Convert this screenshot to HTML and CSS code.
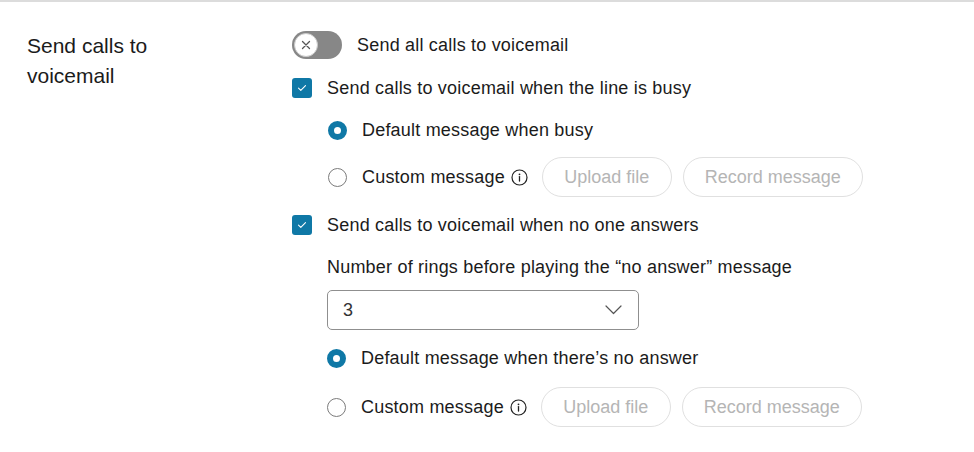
FILE: index.html
```html
<!DOCTYPE html>
<html lang="en">
<head>
<meta charset="utf-8">
<title>Send calls to voicemail</title>
<link rel="stylesheet" href="styles.css">
</head>
<body>
<div class="topline"></div>
<section class="setting">
  <h2 class="setting-title">Send calls to<br>voicemail</h2>
  <div class="controls">
    <div class="row toggle-row">
      <span class="toggle" role="switch" aria-checked="false">
        <span class="knob">
          <svg width="10" height="10" viewBox="0 0 10 10"><path d="M1.5 1.5 L8.5 8.5 M8.5 1.5 L1.5 8.5" stroke="#555" stroke-width="1.3" stroke-linecap="round" fill="none"/></svg>
        </span>
      </span>
      <span class="label">Send all calls to voicemail</span>
    </div>

    <div class="row cb-row">
      <span class="checkbox">
        <svg width="10" height="8" viewBox="0 0 10 8"><path d="M1.5 4.2 L3.8 6.3 L8.5 1.6" stroke="#fff" stroke-width="1.1" fill="none" stroke-linecap="round" stroke-linejoin="round"/></svg>
      </span>
      <span class="label">Send calls to voicemail when the line is busy</span>
    </div>
    <div class="sub">
      <div class="row radio-row r1">
        <span class="radio checked"></span>
        <span class="label">Default message when busy</span>
      </div>
      <div class="row radio-row btn-row r2">
        <span class="radio"></span>
        <span class="label">Custom message</span>
        <svg class="info" width="17" height="17" viewBox="0 0 17 17"><circle cx="8.5" cy="8.5" r="7.5" stroke="#222" stroke-width="1.2" fill="none"/><circle cx="8.5" cy="5.3" r="0.9" fill="#222"/><path d="M8.5 7.6 V12" stroke="#222" stroke-width="1.3" stroke-linecap="round"/></svg>
        <span class="pill pill-upload">Upload file</span>
        <span class="pill pill-record">Record message</span>
      </div>
    </div>

    <div class="row cb-row cb2">
      <span class="checkbox">
        <svg width="10" height="8" viewBox="0 0 10 8"><path d="M1.5 4.2 L3.8 6.3 L8.5 1.6" stroke="#fff" stroke-width="1.1" fill="none" stroke-linecap="round" stroke-linejoin="round"/></svg>
      </span>
      <span class="label">Send calls to voicemail when no one answers</span>
    </div>
    <div class="sub sub-plain">
      <div class="row field-label">Number of rings before playing the “no answer” message</div>
      <div class="select">
        <span class="select-value">3</span>
        <svg width="17" height="10" viewBox="0 0 17 10"><path d="M1 1 L8.5 8.5 L16 1" stroke="#555" stroke-width="1.2" fill="none" stroke-linecap="round" stroke-linejoin="round"/></svg>
      </div>
      <div class="row radio-row r3">
        <span class="radio checked"></span>
        <span class="label">Default message when there’s no answer</span>
      </div>
      <div class="row radio-row btn-row r4">
        <span class="radio"></span>
        <span class="label">Custom message</span>
        <svg class="info" width="17" height="17" viewBox="0 0 17 17"><circle cx="8.5" cy="8.5" r="7.5" stroke="#222" stroke-width="1.2" fill="none"/><circle cx="8.5" cy="5.3" r="0.9" fill="#222"/><path d="M8.5 7.6 V12" stroke="#222" stroke-width="1.3" stroke-linecap="round"/></svg>
        <span class="pill pill-upload">Upload file</span>
        <span class="pill pill-record">Record message</span>
      </div>
    </div>
  </div>
</section>
</body>
</html>
```

FILE: styles.css
```css
* { box-sizing: border-box; }
html, body { margin: 0; padding: 0; background: #fff; }
body {
  font-family: "Liberation Sans", Arial, sans-serif;
  color: #1b1b1b;
  font-size: 18px;
  letter-spacing: 0.2px;
}
.topline { height: 2px; background: #dcdcdc; }

.setting {
  display: grid;
  grid-template-columns: 265px 1fr;
  padding: 28px 0 0 27px;
}
.setting-title {
  margin: 1px 0 0 0;
  font-size: 21px;
  font-weight: 400;
  line-height: 30px;
  letter-spacing: 0;
  color: #1b1b1b;
}
.controls { display: flex; flex-direction: column; }

.row { display: flex; align-items: center; }
.label { white-space: nowrap; }

.toggle-row { height: 28px; margin-top: 1px; }
.toggle {
  width: 50px; height: 28px;
  border-radius: 14px;
  background: #878787;
  position: relative;
  margin-right: 15px;
  flex: none;
}
.knob {
  position: absolute; left: 2px; top: 2px;
  width: 24px; height: 24px; border-radius: 50%;
  background: #fff;
  border: 1px solid #c8c8c8;
  display: flex; align-items: center; justify-content: center;
}

.cb-row { height: 24px; margin-top: 17px; }
.cb2 { margin-top: 16px; }
.checkbox {
  width: 20px; height: 20px; border-radius: 3px;
  background: #0f78a6;
  display: flex; align-items: center; justify-content: center;
  margin-right: 15px;
  flex: none;
}

.sub { padding-left: 36px; display: flex; flex-direction: column; }
.sub-plain { padding-left: 35px; }
.radio-row { height: 24px; }
.btn-row { height: 40px; }
.r1 { margin-top: 18px; }
.r2 { margin-top: 15px; }
.r3 { margin-top: 16px; }
.r4 { margin-top: 17px; }
.radio {
  width: 19px; height: 19px; border-radius: 50%;
  border: 1.5px solid #7b7b7b;
  margin-right: 15px;
  flex: none;
}
.radio.checked { border: 6px solid #0f78a6; }

.info { margin-left: 6px; margin-right: 14px; flex: none; }
.pill {
  height: 40px; border-radius: 20px;
  border: 1px solid #e0e0e0;
  color: #b5b5b5;
  display: flex; align-items: center; justify-content: center;
  white-space: nowrap;
  letter-spacing: 0;
}
.pill-upload { width: 130px; margin-right: 11px; }
.pill-record { width: 180px; }

.field-label { height: 24px; margin-top: 18px; white-space: nowrap; }
.select {
  margin-top: 11px;
  width: 312px; height: 40px;
  border: 1px solid #8f8f8f; border-radius: 5px;
  display: flex; align-items: center; justify-content: space-between;
  padding: 0 16px 0 15px;
}
.select-value { color: #333; }
```
